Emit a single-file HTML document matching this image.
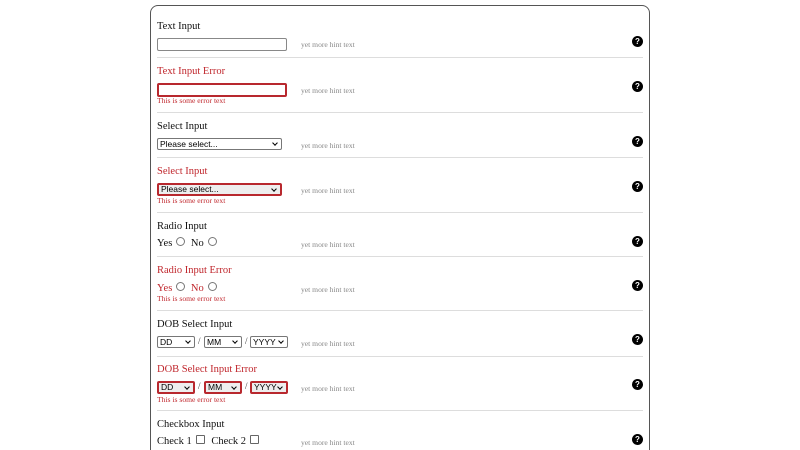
<!DOCTYPE html>
<html><head><style>
html,body{margin:0;width:800px;height:450px;overflow:hidden}
body{background:#fff;font-family:"Liberation Serif",serif;position:relative}
#wrap{position:absolute;left:0;top:0;width:800px;height:450px;overflow:hidden}
.box{position:absolute;left:150px;top:5px;width:498px;height:470px;border:1px solid #555;border-radius:8px}
.a{position:absolute}
.lbl{font-size:10.5px;color:#111}
.err{color:#c0272d}
.sep{position:absolute;left:157px;width:486px;height:1px;background:#ddd}
.hint{position:absolute;left:301px;font-size:7.6px;color:#888}
.et{position:absolute;left:157px;font-size:7.6px;color:#c0272d}
.q{position:absolute;left:632px;width:11px;height:11px;border-radius:50%;background:#000;color:#fff;font:bold 8px/11px "Liberation Sans",sans-serif;text-align:center}
.inp{position:absolute;left:157px;width:128px;height:11px;border:1px solid #888;border-radius:2px}
.sel{position:absolute;box-sizing:border-box;height:12px;border:1px solid #777;border-radius:2px;font:8.5px/10px "Liberation Sans",sans-serif;padding-left:2px;color:#000;background:#fff}
.sel:after{content:"";position:absolute;right:4px;top:2px;width:3px;height:3px;border-right:1.5px solid #000;border-bottom:1.5px solid #000;transform:rotate(45deg)}
.e{border:2px solid #b8282e;background:#eee;line-height:9px}
.rad{display:inline-block;width:7px;height:7px;border:1px solid #777;border-radius:50%;vertical-align:0px;margin:0 3px 0 4px}
.cb{display:inline-block;width:7px;height:7px;border:1px solid #666;border-radius:1px;margin:0 4px 0 4px}
.sl{position:absolute;font-size:9px;color:#333}
</style></head><body><div id="wrap">
<div class="box"></div>
<div class="a lbl" style="left:157px;top:21px">Text Input</div>
<div class="inp" style="top:38px"></div>
<div class="hint" style="top:40px">yet more hint text</div><div class="q" style="top:36px">?</div>
<div class="sep" style="top:57px"></div>

<div class="a lbl err" style="left:157px;top:66px">Text Input Error</div>
<div class="inp" style="top:83px;border:2px solid #b8282e;width:126px;height:10px"></div>
<div class="et" style="top:96px">This is some error text</div>
<div class="hint" style="top:86px">yet more hint text</div><div class="q" style="top:81px">?</div>
<div class="sep" style="top:112px"></div>

<div class="a lbl" style="left:157px;top:121px">Select Input</div>
<div class="sel" style="left:157px;top:138px;width:125px">Please select...</div>
<div class="hint" style="top:141px">yet more hint text</div><div class="q" style="top:136px">?</div>
<div class="sep" style="top:157px"></div>

<div class="a lbl err" style="left:157px;top:166px">Select Input</div>
<div class="sel e" style="left:157px;top:183px;width:125px;height:13px">Please select...</div>
<div class="et" style="top:196px">This is some error text</div>
<div class="hint" style="top:186px">yet more hint text</div><div class="q" style="top:181px">?</div>
<div class="sep" style="top:212px"></div>

<div class="a lbl" style="left:157px;top:221px">Radio Input</div>
<div class="a lbl" style="left:157px;top:237px">Yes<span class="rad"></span> No<span class="rad"></span></div>
<div class="hint" style="top:240px">yet more hint text</div><div class="q" style="top:236px">?</div>
<div class="sep" style="top:256px"></div>

<div class="a lbl err" style="left:157px;top:265px">Radio Input Error</div>
<div class="a lbl err" style="left:157px;top:282px">Yes<span class="rad"></span> No<span class="rad"></span></div>
<div class="et" style="top:294px">This is some error text</div>
<div class="hint" style="top:285px">yet more hint text</div><div class="q" style="top:280px">?</div>
<div class="sep" style="top:310px"></div>

<div class="a lbl" style="left:157px;top:319px">DOB Select Input</div>
<div class="sel" style="left:157px;top:336px;width:38px">DD</div><div class="sl" style="left:198px;top:336px">/</div>
<div class="sel" style="left:204px;top:336px;width:38px">MM</div><div class="sl" style="left:245px;top:336px">/</div>
<div class="sel" style="left:250px;top:336px;width:38px">YYYY</div>
<div class="hint" style="top:339px">yet more hint text</div><div class="q" style="top:334px">?</div>
<div class="sep" style="top:356px"></div>

<div class="a lbl err" style="left:157px;top:364px">DOB Select Input Error</div>
<div class="sel e" style="left:157px;top:381px;width:38px;height:13px">DD</div><div class="sl" style="left:198px;top:381px">/</div>
<div class="sel e" style="left:204px;top:381px;width:38px;height:13px">MM</div><div class="sl" style="left:245px;top:381px">/</div>
<div class="sel e" style="left:250px;top:381px;width:38px;height:13px">YYYY</div>
<div class="et" style="top:395px">This is some error text</div>
<div class="hint" style="top:384px">yet more hint text</div><div class="q" style="top:379px">?</div>
<div class="sep" style="top:410px"></div>

<div class="a lbl" style="left:157px;top:419px">Checkbox Input</div>
<div class="a lbl" style="left:157px;top:435px">Check 1<span class="cb"></span> Check 2<span class="cb"></span></div>
<div class="hint" style="top:438px">yet more hint text</div><div class="q" style="top:434px">?</div>
</div></body></html>
